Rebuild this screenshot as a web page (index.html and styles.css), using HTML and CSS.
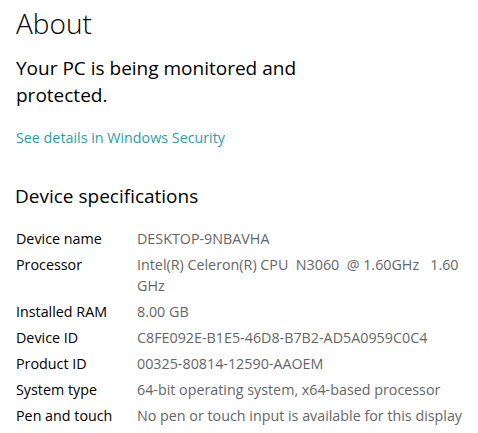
FILE: index.html
```html
<!DOCTYPE html>
<html lang="en">
<head>
<meta charset="utf-8">
<title>About</title>
<link rel="stylesheet" href="styles.css">
</head>
<body>
<main class="page">
  <h1 class="title">About</h1>
  <p class="status">Your PC is being monitored and protected.</p>
  <a class="link" href="#">See details in Windows Security</a>
  <h2 class="section">Device specifications</h2>
  <dl class="specs">
    <div class="row"><dt>Device name</dt><dd>DESKTOP-9NBAVHA</dd></div>
    <div class="row"><dt>Processor</dt><dd class="pre">Intel(R) Celeron(R) CPU  N3060  @ 1.60GHz   1.60 GHz</dd></div>
    <div class="row"><dt>Installed RAM</dt><dd>8.00 GB</dd></div>
    <div class="row"><dt>Device ID</dt><dd>C8FE092E-B1E5-46D8-B7B2-AD5A0959C0C4</dd></div>
    <div class="row"><dt>Product ID</dt><dd>00325-80814-12590-AAOEM</dd></div>
    <div class="row"><dt>System type</dt><dd>64-bit operating system, x64-based processor</dd></div>
    <div class="row"><dt>Pen and touch</dt><dd>No pen or touch input is available for this display</dd></div>
  </dl>
</main>
</body>
</html>
```
FILE: styles.css
```css
html, body {
  margin: 0;
  padding: 0;
  background: #ffffff;
}
body {
  font-family: "Open Sans", "Noto Sans", "Liberation Sans", sans-serif;
  color: #000000;
}
.page {
  padding: 4px 0 0 16px;
}
.title {
  margin: 0;
  font-size: 28px;
  font-weight: 300;
  line-height: 38px;
}
.status {
  margin: 13px 0 0 0;
  width: 290px;
  font-size: 19px;
  font-weight: 400;
  line-height: 27px;
}
.link {
  display: block;
  margin-top: 19px;
  font-size: 14.3px;
  line-height: 20px;
  color: #2a9fa9;
  text-decoration: none;
}
.section {
  margin: 34px 0 0 -1px;
  font-size: 19px;
  font-weight: 400;
  line-height: 28px;
}
.specs {
  margin: 18px 0 0 0;
  display: flex;
  flex-direction: column;
  gap: 5px;
  font-size: 14.3px;
  line-height: 21px;
}
.row {
  display: grid;
  grid-template-columns: 121px 332px;
}
.row dt {
  margin: 0;
  color: #000000;
}
.row dd {
  margin: 0;
  color: #666666;
}
.pre {
  white-space: pre-wrap;
}
```
